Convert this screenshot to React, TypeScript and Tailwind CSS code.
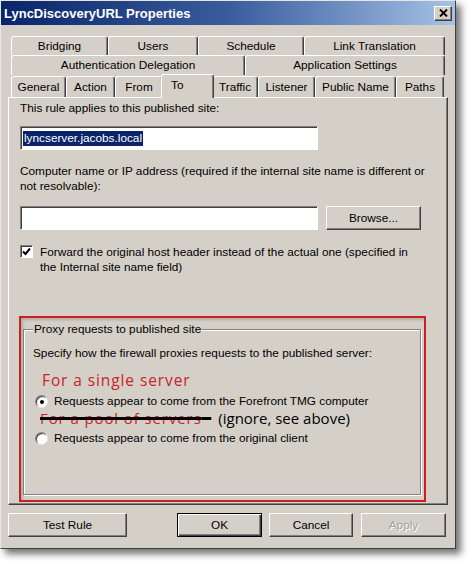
import React from 'react';

const ui = "font-['Liberation_Sans',Arial,sans-serif]";
const note = "font-['Open_Sans',sans-serif]";

type TabDef = { label: string; w: string; selected?: boolean };

const row1: TabDef[] = [
    { label: 'Bridging', w: 'w-[97px]' },
    { label: 'Users', w: 'w-[90px]' },
    { label: 'Schedule', w: 'w-[106px]' },
    { label: 'Link Translation', w: 'w-[141px]' },
];
const row2: TabDef[] = [
    { label: 'Authentication Delegation', w: 'w-[234px]' },
    { label: 'Application Settings', w: 'w-[200px]' },
];
const row3: TabDef[] = [
    { label: 'General', w: 'w-[55px]' },
    { label: 'Action', w: 'w-[49px]' },
    { label: 'From', w: 'w-[48px]' },
    { label: 'To', w: 'w-[53px]', selected: true },
    { label: 'Traffic', w: 'w-[46px]' },
    { label: 'Listener', w: 'w-[57px]' },
    { label: 'Public Name', w: 'w-[81px]' },
    { label: 'Paths', w: 'w-[48px]' },
];

const tabBase = 'flex items-center bg-[#d4d0c8] border-t border-l border-r border-t-white border-l-white border-r-[#404040] rounded-t-[3px] shadow-[inset_-1px_0_0_#808080]';

function Tab({ t, h }: { t: TabDef; h: string }) {
    if (t.selected) {
        return (
            <div className={`${tabBase} ${t.w} h-[24px] -mx-[2px] -mb-[1px] relative z-10 justify-start pl-[9px] pb-[3px]`}>
                {t.label}
            </div>
        );
    }
    return <div className={`${tabBase} ${t.w} ${h} justify-center`}>{t.label}</div>;
}

const raised = 'bg-[#d4d0c8] border border-t-white border-l-white border-r-[#404040] border-b-[#404040] shadow-[inset_-1px_-1px_0_#808080]';
const sunken = 'bg-white border border-t-[#808080] border-l-[#808080] border-r-white border-b-white shadow-[inset_1px_1px_0_#404040]';

function Radio({ checked }: { checked?: boolean }) {
    return (
        <div className="w-[13px] h-[13px] rounded-full bg-white border border-t-[#808080] border-l-[#808080] border-r-[#e8e6e2] border-b-[#e8e6e2] shadow-[inset_1px_1px_0_#404040] flex items-center justify-center shrink-0">
            {checked && <div className="w-[4px] h-[4px] rounded-full bg-black" />}
        </div>
    );
}

export default function App() {
    return (
        <div className={`w-[474px] h-[567px] bg-white overflow-hidden ${ui} text-[11.8px] leading-[15px] text-black`}>
            <div className="w-[456px] h-[549px] bg-[#d4d0c8] border border-t-[#e8e6e2] border-l-[#e8e6e2] border-r-[#404040] border-b-[#404040] shadow-[5px_5px_7px_rgba(0,0,0,0.55)] flex flex-col">
                {/* title bar */}
                <div className="h-[24px] bg-linear-to-r from-[#0a246a] via-[#3a5c9c] to-[#a6c2e6] flex items-center justify-between pl-[3px] pr-[3px]">
                    <span className="text-white font-bold text-[13px]">LyncDiscoveryURL Properties</span>
                    <div className={`w-[18px] h-[15px] ${raised} flex items-center justify-center`}>
                        <svg width="9" height="8" viewBox="0 0 9 8">
                            <path d="M1 0.5 L8 7.5 M8 0.5 L1 7.5" stroke="#000" strokeWidth="1.8" />
                        </svg>
                    </div>
                </div>

                {/* tabs */}
                <div className="mt-[11px] ml-[10px] flex flex-col">
                    <div className="flex h-[19px]">
                        {row1.map(t => <Tab key={t.label} t={t} h="h-[19px]" />)}
                    </div>
                    <div className="flex h-[20px]">
                        {row2.map(t => <Tab key={t.label} t={t} h="h-[20px]" />)}
                    </div>
                    <div className="flex items-end h-[22px]">
                        {row3.map(t => <Tab key={t.label} t={t} h="h-[21px]" />)}
                    </div>
                </div>

                {/* panel */}
                <div className="ml-[7px] w-[440px] h-[408px] border border-t-white border-l-white border-r-[#404040] border-b-[#404040] shadow-[inset_-1px_-1px_0_#808080] flex flex-col pl-[11px] pt-[3px]">
                    <p>This rule applies to this published site:</p>
                    <div className={`mt-[10px] w-[298px] h-[24px] ${sunken} flex items-center pl-[2px]`}>
                        <span className="bg-[#0a246a] text-white px-[1px]">lyncserver.jacobs.local</span>
                    </div>
                    <p className="mt-[14px] whitespace-nowrap">
                        Computer name or IP address (required if the internal site name is different or
                        <br />
                        not resolvable):
                    </p>
                    <div className="mt-[12px] flex gap-[8px]">
                        <div className={`w-[298px] h-[24px] ${sunken}`} />
                        <div className={`w-[95px] h-[24px] ${raised} flex items-center justify-center`}>Browse...</div>
                    </div>
                    <div className="mt-[15px] flex gap-[7px]">
                        <div className={`w-[13px] h-[13px] ${sunken} flex items-center justify-center shrink-0`}>
                            <svg width="9" height="9" viewBox="0 0 9 9">
                                <path d="M1 4.5 L3.5 7 L8 1.5" stroke="#000" strokeWidth="2" fill="none" />
                            </svg>
                        </div>
                        <p className="whitespace-nowrap">
                            Forward the original host header instead of the actual one (specified in
                            <br />
                            the Internal site name field)
                        </p>
                    </div>

                    {/* annotation box */}
                    <div className="mt-[41px] -ml-[1px] w-[407px] h-[186px] border-2 border-[#cc1f1f] shadow-[inset_2px_2px_3px_rgba(0,0,0,0.18)] pl-[2px] pt-[11px]">
                        <div className="w-[398px] h-[166px] border border-[#808080] shadow-[inset_1px_1px_0_#fff,1px_1px_0_#fff] flex flex-col pl-[9px]">
                            <span className="-mt-[8px] self-start px-[1px] bg-[#d4d0c8]">Proxy requests to published site</span>
                            <p className="mt-[9px]">Specify how the firewall proxies requests to the published server:</p>
                            <p className={`mt-[10px] ml-[9px] ${note} text-[15.5px] leading-[18px] tracking-[0.9px] text-[#cc2229]`}>For a single server</p>
                            <div className="mt-[5px] ml-[2px] flex items-center gap-[6px]">
                                <Radio checked />
                                <span>Requests appear to come from the Forefront TMG computer</span>
                            </div>
                            <p className={`ml-[7px] ${note} text-[15px] leading-[18px] whitespace-nowrap`}>
                                <span className="text-[#cc2229] tracking-[0.9px] line-through decoration-black decoration-[3px]">For a pool of servers{'\u00a0\u00a0'}</span>
                                <span className="ml-[7px]">(ignore, see above)</span>
                            </p>
                            <div className="mt-[4px] ml-[2px] flex items-center gap-[6px]">
                                <Radio />
                                <span>Requests appear to come from the original client</span>
                            </div>
                        </div>
                    </div>
                </div>

                {/* buttons */}
                <div className="mt-[8px] ml-[7px] flex">
                    <div className={`w-[119px] h-[24px] ${raised} flex items-center justify-center`}>Test Rule</div>
                    <div className="ml-[50px] w-[85px] h-[24px] bg-[#d4d0c8] border border-black shadow-[inset_1px_1px_0_#fff,inset_-1px_-1px_0_#404040,inset_-2px_-2px_0_#808080] flex items-center justify-center">OK</div>
                    <div className={`ml-[7px] w-[84px] h-[24px] ${raised} flex items-center justify-center`}>Cancel</div>
                    <div className={`ml-[8px] w-[85px] h-[24px] ${raised} flex items-center justify-center text-[#a0a0a0] [text-shadow:1px_1px_0_#fff]`}>Apply</div>
                </div>
            </div>
        </div>
    );
}
